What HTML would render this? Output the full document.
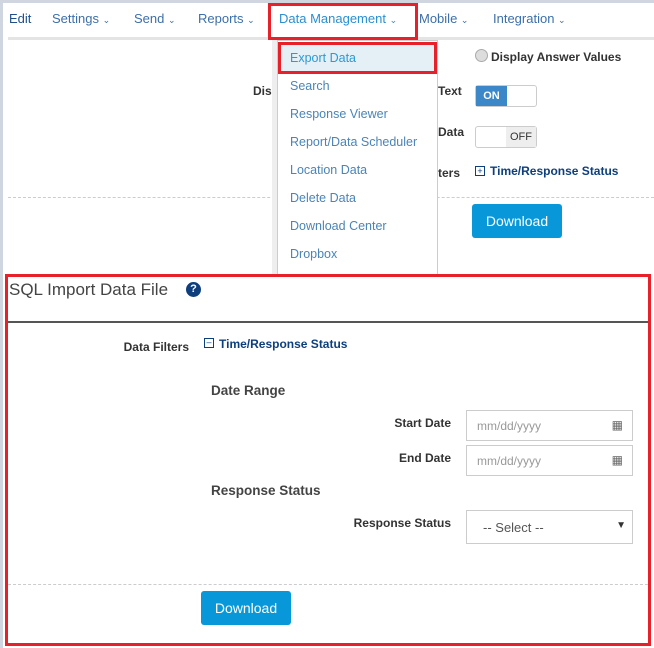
<!DOCTYPE html>
<html><head><meta charset="utf-8"><style>
*{box-sizing:border-box;margin:0;padding:0}
body{width:654px;height:648px;overflow:hidden;background:#fff;font-family:"Liberation Sans",sans-serif;position:relative;color:#333}
.a{position:absolute;white-space:nowrap}
.nav{font-size:13px;color:#3d6fa8;top:11px}
.nav small{font-size:9px}
.dd{font-size:12.5px;color:#4a84b8;left:290px}
.b{font-weight:bold;font-size:12px;color:#333}
.blue{color:#0d3f7c;font-weight:bold;font-size:12px}
.btn{background:#0898d9;color:#fff;font-size:14px;border-radius:3px;text-align:center;line-height:34px;width:90px;height:34px}
.inp{border:1px solid #ccc;background:#fff;width:167px;height:31px;font-size:12px;color:#999;padding:8px 10px}
</style></head><body>
<div class="a" style="left:0;top:0;width:654px;height:3px;background:#cfd6e0"></div>
<div class="a" style="left:0;top:0;width:3px;height:648px;background:#cfd6e0"></div>
<div class="a" style="left:8px;top:37px;width:646px;height:3px;background:#e4e4e4"></div>
<div class="a nav" style="left:9px;color:#1f4f8a">Edit</div>
<div class="a nav" style="left:52px">Settings <small>&#8964;</small></div>
<div class="a nav" style="left:134px">Send <small>&#8964;</small></div>
<div class="a nav" style="left:198px">Reports <small>&#8964;</small></div>
<div class="a nav" style="left:279px;color:#2a8fd0">Data Management <small>&#8964;</small></div>
<div class="a nav" style="left:419px">Mobile <small>&#8964;</small></div>
<div class="a nav" style="left:493px">Integration <small>&#8964;</small></div>
<div class="a" style="left:268px;top:3px;width:150px;height:37px;border:3px solid #e8202a"></div>

<div class="a" style="left:475px;top:49px;width:13px;height:13px;border-radius:50%;background:#ddd;border:1px solid #aaa"></div>
<div class="a b" style="left:491px;top:50px">Display Answer Values</div>
<div class="a b" style="left:253px;top:84px">Disp</div>
<div class="a b" style="left:438px;top:84px">Text</div>
<div class="a" style="left:475px;top:85px;width:62px;height:22px;border:1px solid #ccc;border-radius:3px;background:#fff"><div style="width:31px;height:20px;background:#3b87c8;color:#fff;font-size:11px;font-weight:bold;text-align:center;line-height:20px">ON</div></div>
<div class="a b" style="left:438px;top:125px">Data</div>
<div class="a" style="left:475px;top:126px;width:62px;height:22px;border:1px solid #ccc;border-radius:3px;background:#fff"><div style="margin-left:30px;width:30px;height:20px;background:#eee;font-size:11px;text-align:center;line-height:20px;color:#333">OFF</div></div>
<div class="a b" style="left:438px;top:166px">ters</div>
<div class="a" style="left:475px;top:166px;width:10px;height:10px;border:1px solid #0d3f7c;font-size:9px;line-height:8px;text-align:center;color:#0d3f7c">+</div>
<div class="a blue" style="left:490px;top:164px">Time/Response Status</div>
<div class="a" style="left:8px;top:197px;width:646px;border-top:1px dashed #ccc"></div>
<div class="a btn" style="left:472px;top:204px">Download</div>

<div class="a" style="left:272px;top:40px;width:160px;height:243px;background:#eee"></div>
<div class="a" style="left:277px;top:40px;width:161px;height:237px;background:#fff;border:1px solid #ccc"></div>
<div class="a" style="left:278px;top:42px;width:159px;height:32px;background:#e5eff6;border:3px solid #e8202a"></div>
<div class="a dd" style="top:51px;color:#2a9ad6">Export Data</div>
<div class="a dd" style="top:79px">Search</div>
<div class="a dd" style="top:107px">Response Viewer</div>
<div class="a dd" style="top:135px">Report/Data Scheduler</div>
<div class="a dd" style="top:163px">Location Data</div>
<div class="a dd" style="top:191px">Delete Data</div>
<div class="a dd" style="top:219px">Download Center</div>
<div class="a dd" style="top:247px">Dropbox</div>

<div class="a" style="left:5px;top:274px;width:646px;height:372px;border:3px solid #e8202a;background:#fff"></div>
<div class="a" style="left:9px;top:280px;font-size:17px;color:#444">SQL Import Data File</div>
<div class="a" style="left:186px;top:282px;width:15px;height:15px;border-radius:50%;background:#0d3f7c;color:#fff;font-size:11px;font-weight:bold;text-align:center;line-height:15px">?</div>
<div class="a" style="left:8px;top:321px;width:640px;height:2px;background:#555"></div>
<div class="a b" style="left:120px;top:340px;width:69px;text-align:right">Data Filters</div>
<div class="a" style="left:204px;top:338px;width:10px;height:10px;border:1px solid #0d3f7c;font-size:9px;line-height:7px;text-align:center;color:#0d3f7c">–</div>
<div class="a blue" style="left:219px;top:337px">Time/Response Status</div>
<div class="a" style="left:211px;top:383px;font-size:13.5px;font-weight:bold;color:#444">Date Range</div>
<div class="a b" style="left:351px;top:416px;width:100px;text-align:right">Start Date</div>
<div class="a inp" style="left:466px;top:410px">mm/dd/yyyy<span style="position:absolute;right:9px;top:7px;color:#666">▦</span></div>
<div class="a b" style="left:351px;top:451px;width:100px;text-align:right">End Date</div>
<div class="a inp" style="left:466px;top:445px">mm/dd/yyyy<span style="position:absolute;right:9px;top:7px;color:#666">▦</span></div>
<div class="a" style="left:211px;top:483px;font-size:13.5px;font-weight:bold;color:#444">Response Status</div>
<div class="a b" style="left:331px;top:516px;width:120px;text-align:right">Response Status</div>
<div class="a inp" style="left:466px;top:510px;height:34px;color:#555;font-size:13px;padding:9px 16px">-- Select --<span style="position:absolute;right:6px;top:9px;font-size:10px;color:#333">▼</span></div>
<div class="a" style="left:8px;top:584px;width:640px;border-top:1px dashed #ccc"></div>
<div class="a btn" style="left:201px;top:591px">Download</div>
</body></html>
